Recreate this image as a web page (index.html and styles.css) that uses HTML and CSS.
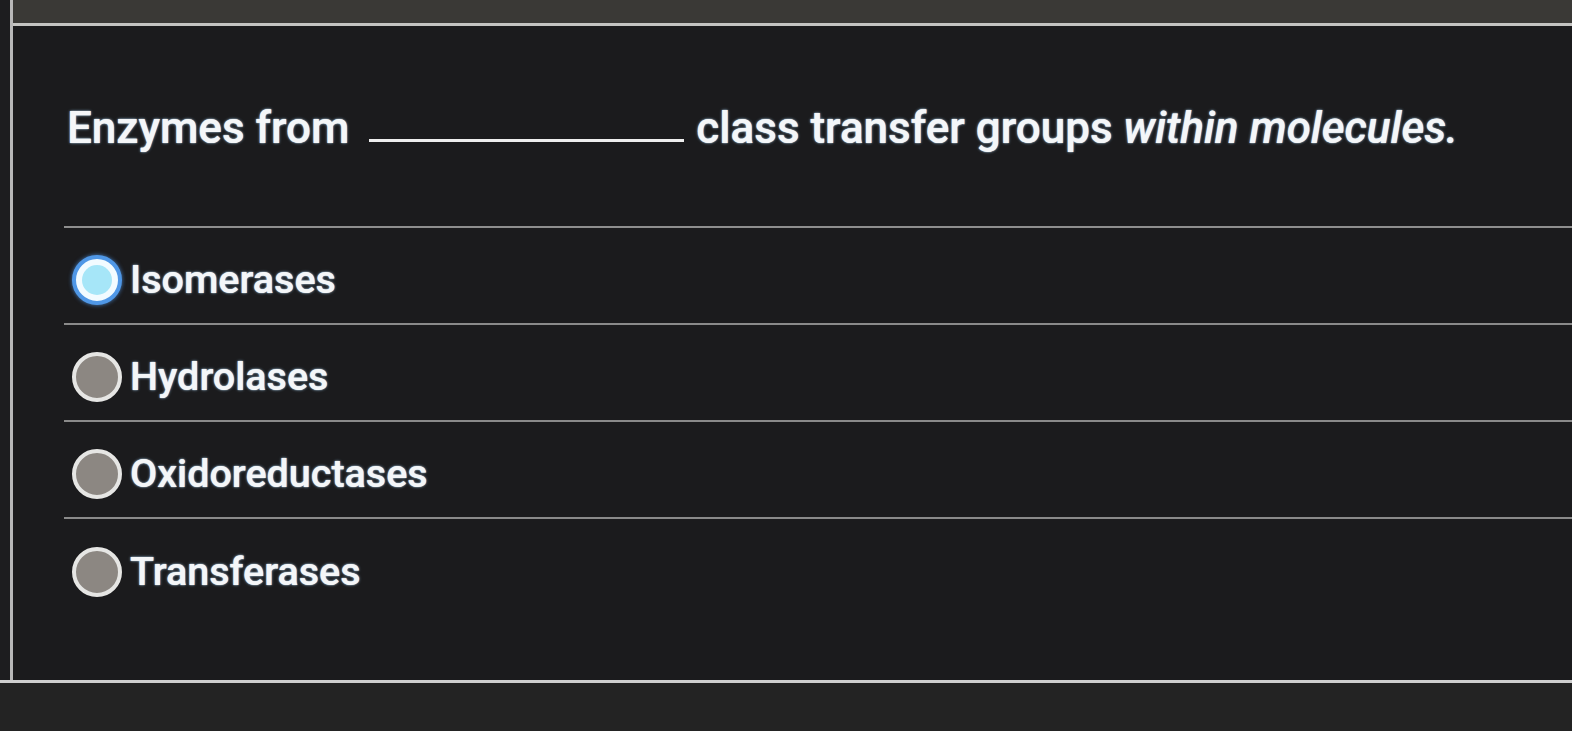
FILE: index.html
```html
<!DOCTYPE html>
<html>
<head>
<meta charset="utf-8">
<link rel="stylesheet" href="styles.css">
</head>
<body>
<div class="screen">
  <div class="frame">
    <div class="gutter"></div>
    <div class="main">
      <div class="topbar"></div>
      <div class="panel">
        <div class="question">
          <span>Enzymes from</span><span class="blank"></span><span>class transfer groups <em>within molecules.</em></span>
        </div>
        <div class="options">
          <label class="option"><span class="radio selected"><span class="dot"></span></span><span class="label">Isomerases</span></label>
          <label class="option"><span class="radio"></span><span class="label">Hydrolases</span></label>
          <label class="option"><span class="radio"></span><span class="label">Oxidoreductases</span></label>
          <label class="option last"><span class="radio"></span><span class="label">Transferases</span></label>
        </div>
      </div>
    </div>
  </div>
  <div class="bottom"></div>
</div>
</body>
</html>
```

FILE: styles.css
```css
html, body {
  margin: 0;
  padding: 0;
  background: #222222;
}
.screen {
  width: 1572px;
  height: 731px;
  display: flex;
  flex-direction: column;
  overflow: hidden;
  font-family: Roboto, "Liberation Sans", sans-serif;
  color: #f4f6f8;
}
.frame {
  display: flex;
  height: 680px;
  border-bottom: 3px solid #cfcfcf;
}
.gutter {
  width: 10px;
  background: #1d1d1f;
  border-right: 3px solid #b8b8b8;
}
.main {
  flex: 1;
  display: flex;
  flex-direction: column;
  background: #1b1b1d;
}
.topbar {
  height: 23px;
  background: #3a3936;
  border-bottom: 3px solid #c4c4c2;
}
.panel {
  flex: 1;
  padding-left: 51px;
}
.question {
  height: 202px;
  display: flex;
  align-items: center;
  font-size: 44px;
  font-weight: 500;
  letter-spacing: 0;
  border-bottom: 2px solid #8e8e8e;
  box-sizing: border-box;
  padding-left: 3px;
  padding-top: 4px;
  text-shadow: 0 0 3px rgba(170, 220, 255, 0.7), 0 0 1px #ffffff;
}
.question em {
  font-style: italic;
}
.blank {
  display: inline-block;
  width: 315px;
  height: 3px;
  background: #eeeeee;
  margin: 24px 12px 0 20px;
}
.options {
  display: flex;
  flex-direction: column;
}
.option {
  height: 97px;
  display: flex;
  align-items: center;
  border-bottom: 2px solid #8a8a8a;
  box-sizing: border-box;
  padding-left: 8px;
  padding-top: 8px;
}
.option.last {
  border-bottom: none;
}
.radio {
  width: 42px;
  height: 42px;
  border-radius: 50%;
  background: #8c8782;
  border: 4px solid #e6e6e4;
  flex: none;
  display: flex;
  align-items: center;
  justify-content: center;
}
.radio.selected {
  background: #f2fbff;
  border-color: #4f97e6;
  box-shadow: 0 0 4px rgba(80, 150, 230, 0.8);
}
.radio.selected .dot {
  width: 30px;
  height: 30px;
  border-radius: 50%;
  background: #a6e6f8;
}
.label {
  margin-left: 8px;
  font-size: 39.5px;
  font-weight: 500;
  letter-spacing: 0;
  text-shadow: 0 0 3px rgba(170, 220, 255, 0.7), 0 0 1px #ffffff;
}
.bottom {
  flex: 1;
  background: #232323;
}
```
